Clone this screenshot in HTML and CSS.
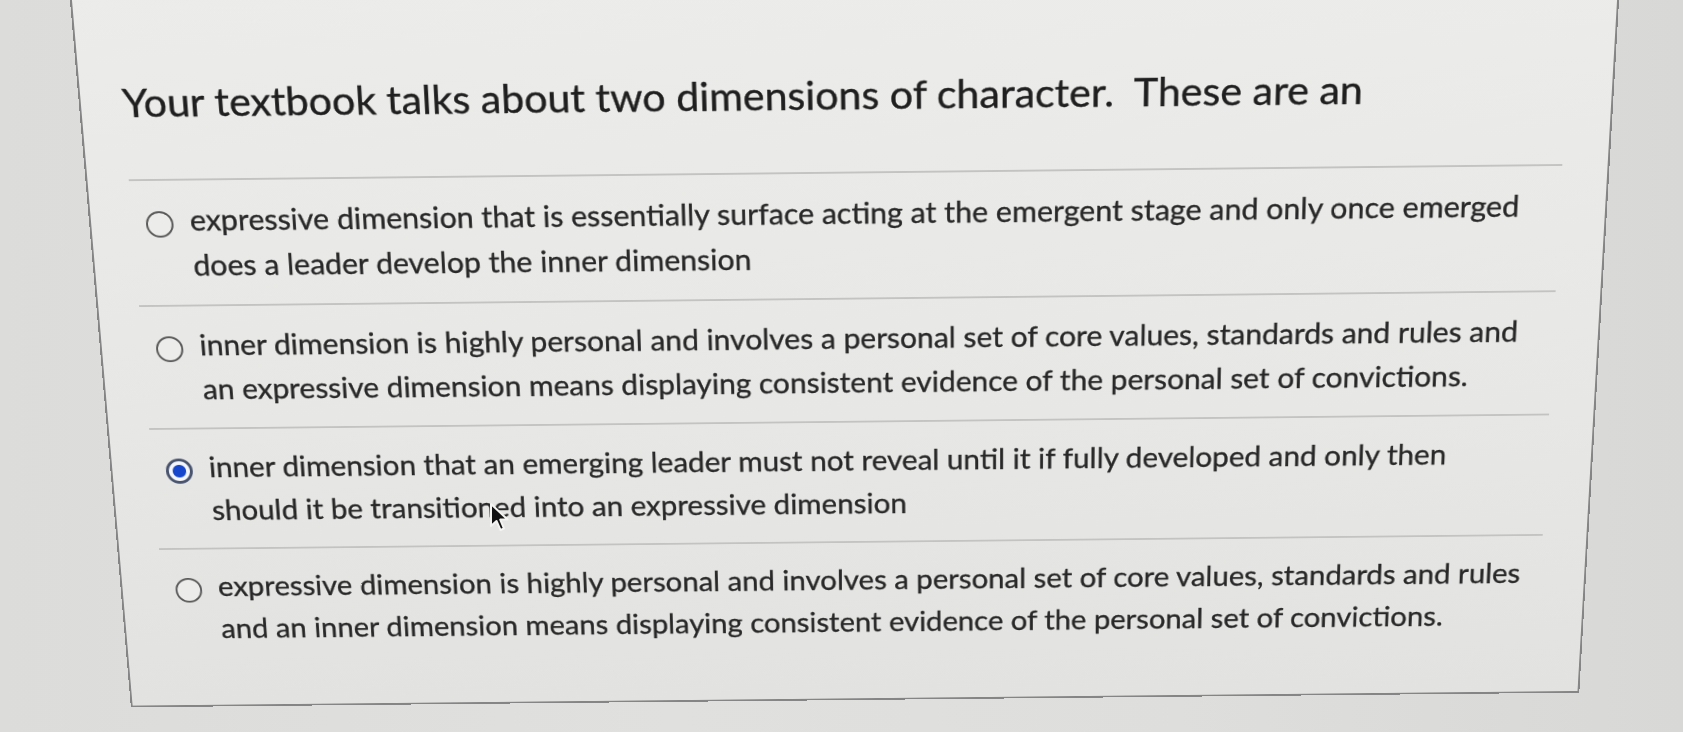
FILE: index.html
```html
<!DOCTYPE html>
<html lang="en">
<head>
<meta charset="utf-8">
<title>Quiz question</title>
<link rel="stylesheet" href="styles.css">
</head>
<body>
<div class="screen">
  <div class="card">
    <div class="question">Your textbook talks about two dimensions of character.&nbsp; These are an</div>
    <div class="answers">
      <div class="answer">
        <span class="radio"></span>
        <div class="label">expressive dimension that is essentially surface acting at the emergent stage and only once emerged does a leader develop the inner dimension</div>
      </div>
      <div class="answer">
        <span class="radio"></span>
        <div class="label">inner dimension is highly personal and involves a personal set of core values, standards and rules and an expressive dimension means displaying consistent evidence of the personal set of convictions.</div>
      </div>
      <div class="answer">
        <span class="radio checked"></span>
        <div class="label">inner dimension that an emerging leader must not reveal until it if fully developed and only then should it be transitioned into an expressive dimension</div>
      </div>
      <div class="answer">
        <span class="radio"></span>
        <div class="label">expressive dimension is highly personal and involves a personal set of core values, standards and rules and an inner dimension means displaying consistent evidence of the personal set of convictions.</div>
      </div>
    </div>
  </div>
  <svg class="cursor" width="22" height="32" viewBox="0 0 22 32" aria-hidden="true">
    <path d="M2 2 L2 24 L7.5 19 L11.5 28 L15 26.5 L11.2 17.6 L18.5 17.6 Z" fill="#111" stroke="#f4f4f2" stroke-width="2" stroke-linejoin="round"/>
  </svg>
</div>
</body>
</html>
```

FILE: styles.css
```css
html, body {
  margin: 0;
  padding: 0;
  background: #dadad8;
}

.screen {
  position: relative;
  width: 1683px;
  height: 732px;
  overflow: hidden;
  background: linear-gradient(90deg, #dcdcda 0%, #e0e0de 40%, #dededc 70%, #d8d8d6 100%);
  perspective: 2000px;
  perspective-origin: 879px 0px;
  font-family: Lato, "Open Sans", "Liberation Sans", sans-serif;
  color: #262626;
}

.card {
  box-sizing: border-box;
  width: 1549px;
  margin: -40px 0 0 70px;
  padding: 110px 46px 46px 42px;
  border: 2px solid #858585;
  background: linear-gradient(180deg, #ececea 0%, #e7e7e5 60%, #e2e2e0 100%);
  transform-origin: 809px 40px;
  transform: rotateX(-10.5deg) rotateZ(-0.63deg);
}

.question {
  font-size: 41.5px;
  line-height: 48px;
  margin: 0 0 57px;
  color: #1f1f1f;
  white-space: nowrap;
  -webkit-text-stroke: 0.4px #1f1f1f;
}

.answer {
  display: flex;
  align-items: flex-start;
  gap: 17px;
  border-top: 2px solid #c3c3c1;
  padding: 18px 0 19px 14px;
}

.radio {
  flex: 0 0 auto;
  box-sizing: border-box;
  width: 28px;
  height: 28px;
  margin-top: 14px;
  border: 2.5px solid #585858;
  border-radius: 50%;
  background: #ececea;
}

.radio.checked {
  border: 3px solid #48536e;
  background: radial-gradient(circle, #1646cc 0 6.5px, #f4f6fa 7.5px);
}

.label {
  max-width: 1384px;
  font-size: 31px;
  line-height: 47.5px;
  color: #282828;
  -webkit-text-stroke: 0.35px #282828;
}

.cursor {
  position: absolute;
  left: 489px;
  top: 502px;
}
```
